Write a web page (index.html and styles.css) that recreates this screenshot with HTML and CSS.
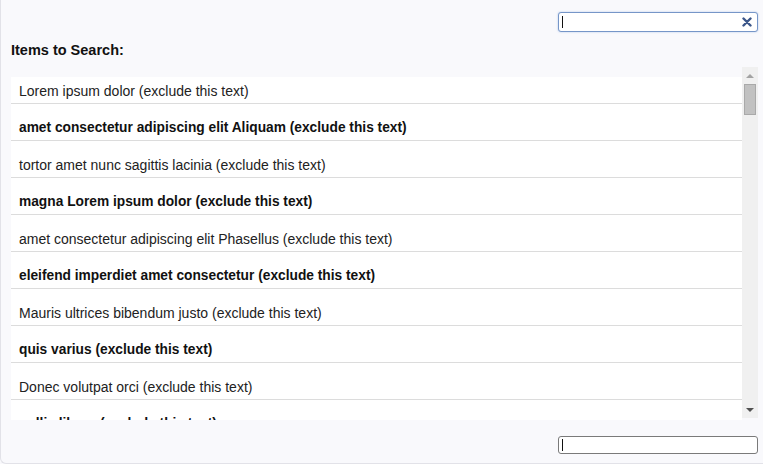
FILE: index.html
```html
<!DOCTYPE html>
<html>
<head>
<meta charset="utf-8">
<link rel="stylesheet" href="styles.css">
</head>
<body>
<div class="panel">
  <div class="topbar">
    <div class="search search-top">
      <span class="caret"></span>
      <svg class="clear" width="10" height="10" viewBox="0 0 10 10"><path d="M1.5 1.5 L8.5 8.5 M8.5 1.5 L1.5 8.5" stroke="#3b5689" stroke-width="2.4" stroke-linecap="round"/></svg>
    </div>
  </div>
  <div class="heading">Items to Search:</div>
  <div class="list">
    <div class="rows">
      <div class="viewport">
        <div class="track">
          <div class="row">Lorem ipsum dolor (exclude this text)</div>
          <div class="row bold">amet consectetur adipiscing elit Aliquam (exclude this text)</div>
          <div class="row">tortor amet nunc sagittis lacinia (exclude this text)</div>
          <div class="row bold">magna Lorem ipsum dolor (exclude this text)</div>
          <div class="row">amet consectetur adipiscing elit Phasellus (exclude this text)</div>
          <div class="row bold">eleifend imperdiet amet consectetur (exclude this text)</div>
          <div class="row">Mauris ultrices bibendum justo (exclude this text)</div>
          <div class="row bold">quis varius (exclude this text)</div>
          <div class="row">Donec volutpat orci (exclude this text)</div>
          <div class="row bold">nullis libero (exclude this text)</div>
        </div>
      </div>
    </div>
    <div class="scrollbar">
      <div class="arrow up"></div>
      <div class="thumb-area"><div class="thumb"></div></div>
      <div class="arrow down"></div>
    </div>
  </div>
  <div class="footer">
    <div class="search search-bottom"><span class="caret"></span></div>
  </div>
</div>
</body>
</html>
```

FILE: styles.css
```css
html, body {
  margin: 0;
  padding: 0;
  background: #f9f9fc;
}
.panel {
  box-sizing: border-box;
  width: 763px;
  height: 464px;
  border-left: 1px solid #e2e2e8;
  border-bottom: 1px solid #e2e2e8;
  border-bottom-left-radius: 6px;
  background: #f9f9fc;
  display: flex;
  flex-direction: column;
  font-family: "Liberation Sans", Arial, sans-serif;
  overflow: hidden;
}
.topbar {
  height: 32px;
  box-sizing: border-box;
  padding: 12px 5px 0 0;
  display: flex;
  justify-content: flex-end;
}
.search {
  box-sizing: border-box;
  width: 200px;
  background: #fff;
  border-radius: 3px;
  display: flex;
  align-items: center;
  padding-left: 3px;
  padding-right: 5px;
}
.search-top {
  height: 20px;
  border: 1px solid #7696c8;
  box-shadow: 0 0 2px rgba(120, 160, 220, 0.6);
}
.search-bottom {
  height: 18px;
  border: 1px solid #7a7a7a;
}
.caret {
  display: block;
  width: 1px;
  height: 12px;
  background: #111;
}
.clear {
  margin-left: auto;
}
.heading {
  height: 36px;
  box-sizing: border-box;
  padding: 10px 0 0 10px;
  font-size: 14.5px;
  line-height: 17px;
  font-weight: bold;
  color: #111;
}
.list {
  display: flex;
  margin-left: 10px;
  height: 352px;
}
.rows {
  width: 731px;
  box-sizing: border-box;
  padding-top: 9px;
  display: flex;
  flex-direction: column;
}
.viewport {
  flex: 1;
  overflow: hidden;
}
.track {
  margin-top: -10px;
}
.row {
  background: #fff;
  padding: 14px 8px 2px;
  line-height: 20px;
  font-size: 14px;
  color: #222;
  border-bottom: 1px solid #dcdcdc;
  white-space: nowrap;
}
.row.bold {
  font-weight: bold;
  font-size: 13.75px;
  color: #111;
}
.scrollbar {
  width: 16px;
  height: 351px;
  margin-top: -1px;
  background: #f0f0f0;
  display: flex;
  flex-direction: column;
}
.arrow {
  height: 17px;
  display: flex;
  align-items: center;
  justify-content: center;
}
.arrow::before {
  content: "";
  width: 0;
  height: 0;
  border-left: 4px solid transparent;
  border-right: 4px solid transparent;
}
.arrow.up::before {
  border-bottom: 4px solid #a3a3a3;
}
.arrow.down::before {
  border-top: 4px solid #505050;
}
.thumb-area {
  flex: 1;
  padding: 0 2px;
}
.thumb {
  box-sizing: border-box;
  height: 31px;
  background: #c1c1c1;
  border: 1px solid #a9a9a9;
}
.footer {
  flex: 1;
  box-sizing: border-box;
  padding: 16px 5px 0 0;
  display: flex;
  justify-content: flex-end;
  align-items: flex-start;
}
```
